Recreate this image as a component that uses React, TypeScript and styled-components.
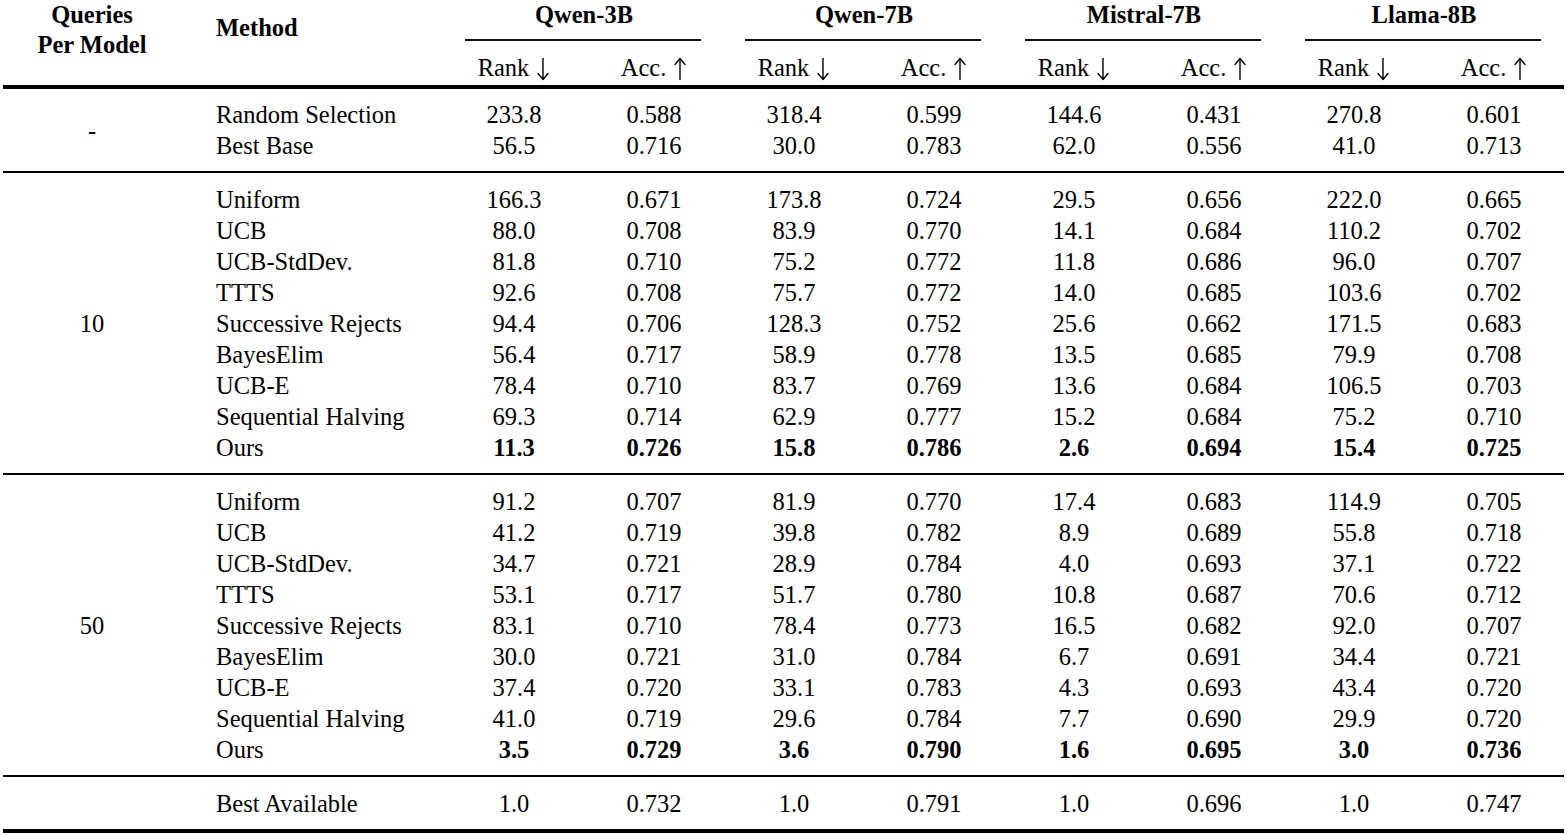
import React from "react";
import styled, { createGlobalStyle, css } from "styled-components";

const GlobalStyle = createGlobalStyle`
  body {
    margin: 0;
    background: #fff;
    color: #000;
    font-family: "Liberation Serif", "Times New Roman", serif;
  }
  * { box-sizing: border-box; }
`;

const Table = styled.table`
  margin-left: 3px;
  width: 1561px;
  table-layout: fixed;
  border-collapse: separate;
  border-spacing: 0;
  font-size: 24.5px;
  line-height: 31px;

  td,
  th {
    padding: 0;
  }
`;

const Col = styled.col<{ $w: number }>`
  width: ${(p) => p.$w}px;
`;

const HeadCell = styled.th<{ $rule?: boolean; $left?: boolean; $pt?: number }>`
  && {
    padding: ${(p) => p.$pt ?? 0}px 0 0 ${(p) => (p.$left ? 35 : 0)}px;
  }
  font-weight: bold;
  line-height: 30px;
  vertical-align: top;
  text-align: ${(p) => (p.$left ? "left" : "center")};
  ${(p) => p.$rule && css`border-bottom: 4px solid #000;`}
`;

const SubHead = styled.th`
  && {
    padding: 12px 0 2px;
  }
  font-weight: normal;
  line-height: 30px;
  text-align: center;
  border-bottom: 4px solid #000;
`;

const Arrow = styled.svg`
  width: 14px;
  height: 24px;
  margin-left: 7px;
  vertical-align: -5px;
  fill: none;
  stroke: #000;
  stroke-width: 1.4;
  stroke-linecap: round;
  stroke-linejoin: round;
`;

const GroupRule = styled.div`
  margin: 9px 23px 0 21px;
  border-top: 2px solid #111;
`;

const Row = styled.tr<{ $first?: boolean; $last?: boolean; $rule?: boolean; $end?: boolean }>`
  && > td {
    ${(p) => p.$first && css`padding-top: ${p.$rule ? 11 : 10}px;`}
    ${(p) => p.$first && p.$rule && css`border-top: 2px solid #000;`}
    ${(p) => p.$last && css`padding-bottom: 10px;`}
    ${(p) => p.$end && css`border-bottom: 4px solid #000;`}
  }
`;

const QueryCell = styled.td`
  text-align: center;
  vertical-align: middle;
  && {
    padding-bottom: 10px;
  }
`;

const MethodCell = styled.td`
  && {
    padding-left: 35px;
  }
  text-align: left;
  white-space: nowrap;
`;

const NumCell = styled.td<{ $bold?: boolean }>`
  text-align: center;
  font-weight: ${(p) => (p.$bold ? "bold" : "normal")};
`;

const DownArrow = () => (
  <Arrow viewBox="0 0 14 24" aria-label="↓">
    <path d="M7 1.5V22.5M2 16.5L7 22.5L12 16.5" />
  </Arrow>
);

const UpArrow = () => (
  <Arrow viewBox="0 0 14 24" aria-label="↑">
    <path d="M7 22.5V1.5M2 7.5L7 1.5L12 7.5" />
  </Arrow>
);

type Entry = { method: string; values: string[]; bold?: boolean };
type Section = { queries: string; rows: Entry[] };

const models = ["Qwen-3B", "Qwen-7B", "Mistral-7B", "Llama-8B"];

const row = (method: string, line: string, bold = false): Entry => ({
  method,
  values: line.split(" "),
  bold,
});

const sections: Section[] = [
  {
    queries: "-",
    rows: [
      row("Random Selection", "233.8 0.588 318.4 0.599 144.6 0.431 270.8 0.601"),
      row("Best Base", "56.5 0.716 30.0 0.783 62.0 0.556 41.0 0.713"),
    ],
  },
  {
    queries: "10",
    rows: [
      row("Uniform", "166.3 0.671 173.8 0.724 29.5 0.656 222.0 0.665"),
      row("UCB", "88.0 0.708 83.9 0.770 14.1 0.684 110.2 0.702"),
      row("UCB-StdDev.", "81.8 0.710 75.2 0.772 11.8 0.686 96.0 0.707"),
      row("TTTS", "92.6 0.708 75.7 0.772 14.0 0.685 103.6 0.702"),
      row("Successive Rejects", "94.4 0.706 128.3 0.752 25.6 0.662 171.5 0.683"),
      row("BayesElim", "56.4 0.717 58.9 0.778 13.5 0.685 79.9 0.708"),
      row("UCB-E", "78.4 0.710 83.7 0.769 13.6 0.684 106.5 0.703"),
      row("Sequential Halving", "69.3 0.714 62.9 0.777 15.2 0.684 75.2 0.710"),
      row("Ours", "11.3 0.726 15.8 0.786 2.6 0.694 15.4 0.725", true),
    ],
  },
  {
    queries: "50",
    rows: [
      row("Uniform", "91.2 0.707 81.9 0.770 17.4 0.683 114.9 0.705"),
      row("UCB", "41.2 0.719 39.8 0.782 8.9 0.689 55.8 0.718"),
      row("UCB-StdDev.", "34.7 0.721 28.9 0.784 4.0 0.693 37.1 0.722"),
      row("TTTS", "53.1 0.717 51.7 0.780 10.8 0.687 70.6 0.712"),
      row("Successive Rejects", "83.1 0.710 78.4 0.773 16.5 0.682 92.0 0.707"),
      row("BayesElim", "30.0 0.721 31.0 0.784 6.7 0.691 34.4 0.721"),
      row("UCB-E", "37.4 0.720 33.1 0.783 4.3 0.693 43.4 0.720"),
      row("Sequential Halving", "41.0 0.719 29.6 0.784 7.7 0.690 29.9 0.720"),
      row("Ours", "3.5 0.729 3.6 0.790 1.6 0.695 3.0 0.736", true),
    ],
  },
  {
    queries: "",
    rows: [row("Best Available", "1.0 0.732 1.0 0.791 1.0 0.696 1.0 0.747")],
  },
];

const App: React.FC = () => {
  return (
    <>
      <GlobalStyle />
      <Table>
        <colgroup>
          <Col $w={178} />
          <Col $w={263} />
          {models.flatMap((m) => [<Col key={m + "r"} $w={140} />, <Col key={m + "a"} $w={140} />])}
        </colgroup>
        <thead>
          <tr>
            <HeadCell rowSpan={2} $rule>
              Queries
              <br />
              Per Model
            </HeadCell>
            <HeadCell rowSpan={2} $rule $left $pt={13}>
              Method
            </HeadCell>
            {models.map((m) => (
              <HeadCell key={m} colSpan={2}>
                {m}
                <GroupRule />
              </HeadCell>
            ))}
          </tr>
          <tr>
            {models.flatMap((m) => [
              <SubHead key={m + "r"}>
                Rank
                <DownArrow />
              </SubHead>,
              <SubHead key={m + "a"}>
                Acc.
                <UpArrow />
              </SubHead>,
            ])}
          </tr>
        </thead>
        {sections.map((section, si) => (
          <tbody key={si}>
            {section.rows.map((entry, ri) => (
              <Row
                key={entry.method}
                $first={ri === 0}
                $last={ri === section.rows.length - 1}
                $rule={si > 0}
                $end={si === sections.length - 1}
              >
                {ri === 0 && <QueryCell rowSpan={section.rows.length}>{section.queries}</QueryCell>}
                <MethodCell>{entry.method}</MethodCell>
                {entry.values.map((v, vi) => (
                  <NumCell key={vi} $bold={entry.bold}>
                    {v}
                  </NumCell>
                ))}
              </Row>
            ))}
          </tbody>
        ))}
      </Table>
    </>
  );
};

export default App;
